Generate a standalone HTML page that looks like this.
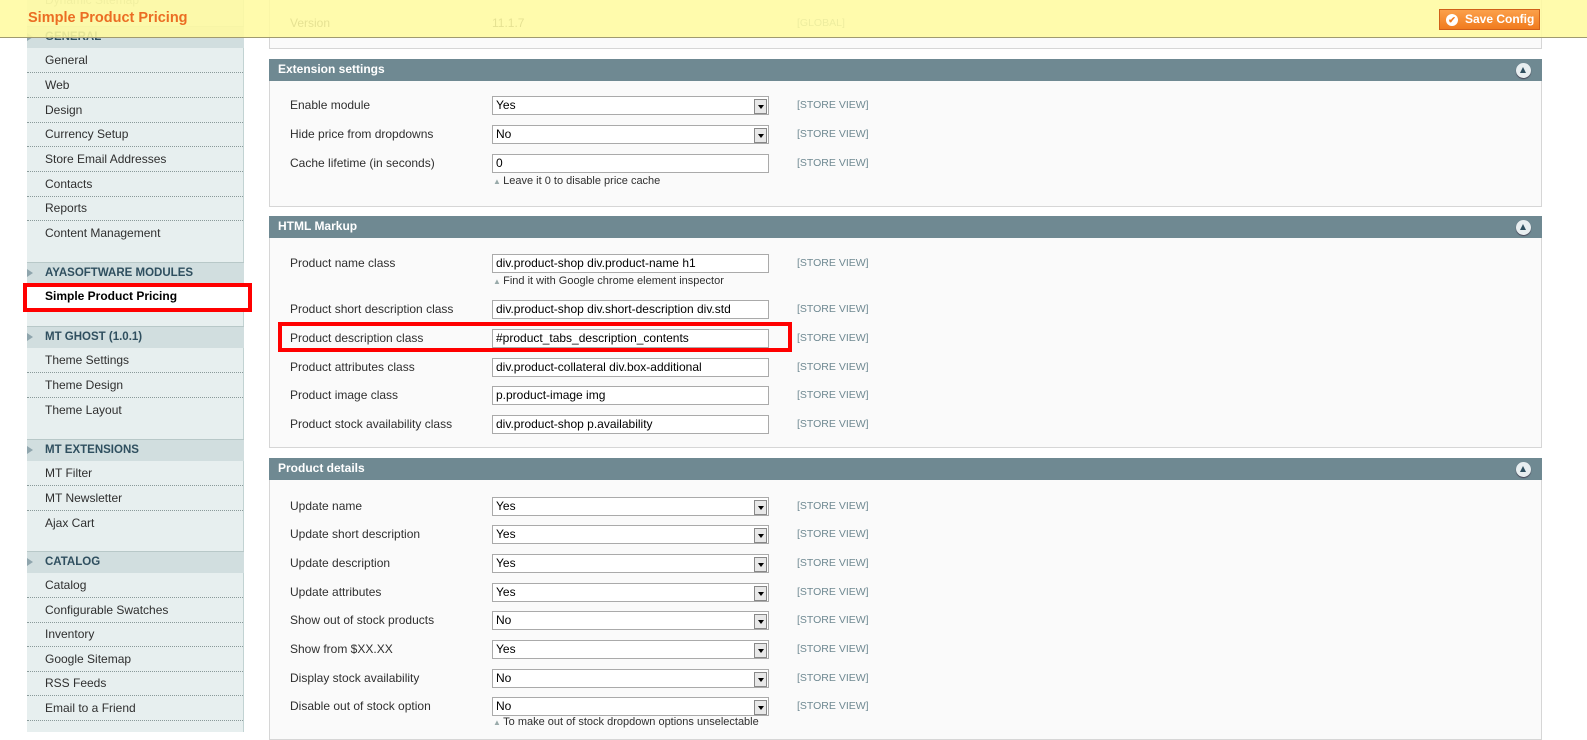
<!DOCTYPE html>
<html><head><meta charset="utf-8"><style>
*{margin:0;padding:0;box-sizing:border-box}
body{width:1587px;height:732px;overflow:hidden;background:#fff;font-family:"Liberation Sans",Arial,sans-serif;font-size:12px;color:#2f2f2f;position:relative}
.a{position:absolute}
#side{left:27px;top:0;width:217px;height:732px;background:#e7efef;border-right:1px solid #c2d3d3}
.it{position:absolute;left:27px;width:216px;height:25px;border-bottom:1px dotted #8a9a9a;padding:0 0 0 18px;line-height:24px;font-size:12px;color:#2f2f2f}
.hd{position:absolute;left:27px;width:217px;height:22px;background:#d1dedf;border-top:1px solid #b8c8c8;line-height:20px;padding-left:18px;font-weight:bold;color:#2f4f5f;font-size:11.5px}
.hd:before{content:"";position:absolute;left:0;top:6px;border-left:6px solid #8fa5ad;border-top:4px solid transparent;border-bottom:4px solid transparent}
.pn{position:absolute;left:269px;width:1273px;background:#fafafa;border:1px solid #d6d6d6;border-top:none}
.ph{position:absolute;left:269px;width:1273px;height:22px;background:#6f8992;color:#fff;font-weight:bold;line-height:21px;padding-left:9px;font-size:12px}
.ph i{position:absolute;right:11px;top:4px;width:15px;height:15px;border-radius:50%;background:#e8eef0;box-shadow:0 1px 1px #445}
.ph i:after{content:"";position:absolute;left:4px;top:4px;border-bottom:6px solid #2f4f5f;border-left:3.5px solid transparent;border-right:3.5px solid transparent}
.lb{position:absolute;left:290px;font-size:12px;color:#2f2f2f}
.in{position:absolute;left:492px;width:277px;height:19px;border:1px solid #aaa;background:#fff;font-size:12px;line-height:17px;padding-left:3px;color:#000}
.sel:after{content:"";position:absolute;right:1px;top:2px;width:11px;height:13px;background:#e8e8e8;border:1px solid #888}
.sel:before{content:"";position:absolute;right:4px;top:8px;z-index:2;border-top:4px solid #000;border-left:3px solid transparent;border-right:3px solid transparent}
.sc{position:absolute;left:797px;font-size:10.5px;color:#6f8992}
.nt{position:absolute;left:493px;font-size:11px;color:#2f2f2f}
.nt:before{content:"▲ ";color:#9aa;font-size:8px}
.rb{position:absolute;border:4px solid #f00}
</style></head><body>
<div id="side" class="a"></div>
<div class="a" style="left:45px;top:-7px;color:#8a9a9a;font-size:12px">Dynamic Sitemap</div>
<div class="hd" style="top:26px">GENERAL</div>
<div class="it" style="top:48px">General</div>
<div class="it" style="top:73px">Web</div>
<div class="it" style="top:98px">Design</div>
<div class="it" style="top:122px">Currency Setup</div>
<div class="it" style="top:147px">Store Email Addresses</div>
<div class="it" style="top:172px">Contacts</div>
<div class="it" style="top:196px">Reports</div>
<div class="it" style="top:221px;border-bottom:none">Content Management</div>
<div class="hd" style="top:262px">AYASOFTWARE MODULES</div>
<div class="a" style="left:27px;top:284px;width:217px;height:26px;background:#fff"></div>
<div class="a" style="left:45px;top:289px;font-weight:bold;color:#000;font-size:12px">Simple Product Pricing</div>
<div class="rb" style="left:23px;top:283px;width:229px;height:29px"></div>
<div class="hd" style="top:326px">MT GHOST (1.0.1)</div>
<div class="it" style="top:348px">Theme Settings</div>
<div class="it" style="top:373px">Theme Design</div>
<div class="it" style="top:398px;border-bottom:none">Theme Layout</div>
<div class="hd" style="top:439px">MT EXTENSIONS</div>
<div class="it" style="top:461px">MT Filter</div>
<div class="it" style="top:486px">MT Newsletter</div>
<div class="it" style="top:511px;border-bottom:none">Ajax Cart</div>
<div class="hd" style="top:551px">CATALOG</div>
<div class="it" style="top:573px">Catalog</div>
<div class="it" style="top:598px">Configurable Swatches</div>
<div class="it" style="top:622px">Inventory</div>
<div class="it" style="top:647px">Google Sitemap</div>
<div class="it" style="top:671px">RSS Feeds</div>
<div class="it" style="top:696px">Email to a Friend</div>

<div class="pn" style="top:0;height:49px"></div>
<div class="lb" style="top:16px">Version</div>
<div class="a" style="left:492px;top:16px;color:#2f2f2f">11.1.7</div>
<div class="sc" style="top:17px">[GLOBAL]</div>

<div class="ph" style="top:59px">Extension settings<i></i></div>
<div class="pn" style="top:81px;height:126px"></div>
<div class="lb" style="top:98px">Enable module</div><div class="in sel" style="top:96px">Yes</div><div class="sc" style="top:99px">[STORE VIEW]</div>
<div class="lb" style="top:127px">Hide price from dropdowns</div><div class="in sel" style="top:125px">No</div><div class="sc" style="top:128px">[STORE VIEW]</div>
<div class="lb" style="top:156px">Cache lifetime (in seconds)</div><div class="in" style="top:154px">0</div><div class="sc" style="top:157px">[STORE VIEW]</div>
<div class="nt" style="top:175px">Leave it 0 to disable price cache</div>

<div class="ph" style="top:216px">HTML Markup<i></i></div>
<div class="pn" style="top:238px;height:210px"></div>
<div class="lb" style="top:256px">Product name class</div><div class="in" style="top:254px">div.product-shop div.product-name h1</div><div class="sc" style="top:257px">[STORE VIEW]</div>
<div class="nt" style="top:275px">Find it with Google chrome element inspector</div>
<div class="lb" style="top:302px">Product short description class</div><div class="in" style="top:300px">div.product-shop div.short-description div.std</div><div class="sc" style="top:303px">[STORE VIEW]</div>
<div class="lb" style="top:331px">Product description class</div><div class="in" style="top:329px">#product_tabs_description_contents</div><div class="sc" style="top:332px">[STORE VIEW]</div>
<div class="rb" style="left:278px;top:322px;width:514px;height:30px"></div>
<div class="lb" style="top:360px">Product attributes class</div><div class="in" style="top:358px">div.product-collateral div.box-additional</div><div class="sc" style="top:361px">[STORE VIEW]</div>
<div class="lb" style="top:388px">Product image class</div><div class="in" style="top:386px">p.product-image img</div><div class="sc" style="top:389px">[STORE VIEW]</div>
<div class="lb" style="top:417px">Product stock availability class</div><div class="in" style="top:415px">div.product-shop p.availability</div><div class="sc" style="top:418px">[STORE VIEW]</div>

<div class="ph" style="top:458px">Product details<i></i></div>
<div class="pn" style="top:480px;height:260px"></div>
<div class="lb" style="top:499px">Update name</div><div class="in sel" style="top:497px">Yes</div><div class="sc" style="top:500px">[STORE VIEW]</div>
<div class="lb" style="top:527px">Update short description</div><div class="in sel" style="top:525px">Yes</div><div class="sc" style="top:528px">[STORE VIEW]</div>
<div class="lb" style="top:556px">Update description</div><div class="in sel" style="top:554px">Yes</div><div class="sc" style="top:557px">[STORE VIEW]</div>
<div class="lb" style="top:585px">Update attributes</div><div class="in sel" style="top:583px">Yes</div><div class="sc" style="top:586px">[STORE VIEW]</div>
<div class="lb" style="top:613px">Show out of stock products</div><div class="in sel" style="top:611px">No</div><div class="sc" style="top:614px">[STORE VIEW]</div>
<div class="lb" style="top:642px">Show from $XX.XX</div><div class="in sel" style="top:640px">Yes</div><div class="sc" style="top:643px">[STORE VIEW]</div>
<div class="lb" style="top:671px">Display stock availability</div><div class="in sel" style="top:669px">No</div><div class="sc" style="top:672px">[STORE VIEW]</div>
<div class="lb" style="top:699px">Disable out of stock option</div><div class="in sel" style="top:697px">No</div><div class="sc" style="top:700px">[STORE VIEW]</div>
<div class="nt" style="top:716px">To make out of stock dropdown options unselectable</div>

<div class="a" style="left:0;top:0;width:1587px;height:38px;background:rgba(255,250,160,0.88);border-bottom:1px solid #a09a70"></div>
<div class="a" style="left:28px;top:10px;font-size:14.5px;font-weight:bold;color:#eb6d23">Simple Product Pricing</div>
<div class="a" style="left:1439px;top:9px;width:101px;height:21px;background:linear-gradient(#fba04a,#f17b1e);border:1px solid #d0601a;color:#fff;font-weight:bold;font-size:12px;line-height:18px;padding-left:25px">Save Config
<span class="a" style="left:6px;top:4px;width:12px;height:12px;border-radius:50%;background:#fff;color:#f07a1e;font-size:9px;line-height:12px;text-align:center;padding:0">✔</span></div>
</body></html>
